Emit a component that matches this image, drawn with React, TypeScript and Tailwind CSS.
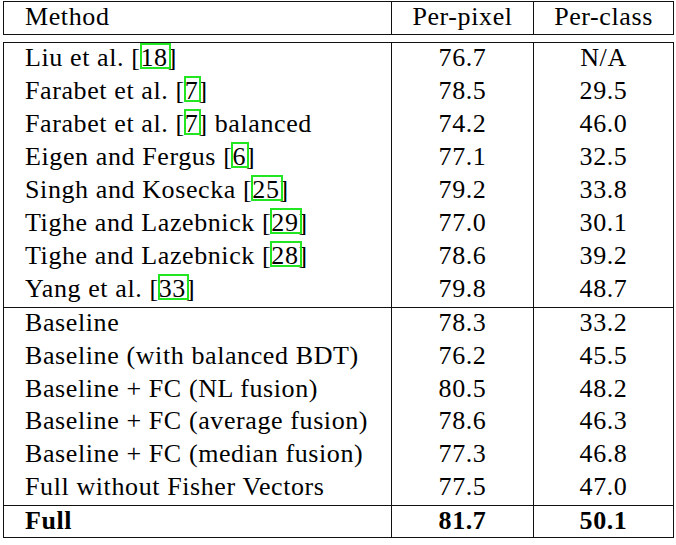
import React from "react";

const Cite = ({ n }: { n: string }) => (
  <>
    [
    <span className="relative">
      {n}
      <span className="absolute top-0 bottom-[3px] left-[-1px] right-[-3px] border-2 border-[#22e622]" />
    </span>
    ]
  </>
);

type Row = { m: React.ReactNode; a: string; b: string };

const sec1: Row[] = [
  { m: <>Liu et al. <Cite n="18" /></>, a: "76.7", b: "N/A" },
  { m: <>Farabet et al. <Cite n="7" /></>, a: "78.5", b: "29.5" },
  { m: <>Farabet et al. <Cite n="7" /> balanced</>, a: "74.2", b: "46.0" },
  { m: <>Eigen and Fergus <Cite n="6" /></>, a: "77.1", b: "32.5" },
  { m: <>Singh and Kosecka <Cite n="25" /></>, a: "79.2", b: "33.8" },
  { m: <>Tighe and Lazebnick <Cite n="29" /></>, a: "77.0", b: "30.1" },
  { m: <>Tighe and Lazebnick <Cite n="28" /></>, a: "78.6", b: "39.2" },
  { m: <>Yang et al. <Cite n="33" /></>, a: "79.8", b: "48.7" },
];

const sec2: Row[] = [
  { m: "Baseline", a: "78.3", b: "33.2" },
  { m: "Baseline (with balanced BDT)", a: "76.2", b: "45.5" },
  { m: "Baseline + FC (NL fusion)", a: "80.5", b: "48.2" },
  { m: "Baseline + FC (average fusion)", a: "78.6", b: "46.3" },
  { m: "Baseline + FC (median fusion)", a: "77.3", b: "46.8" },
  { m: "Full without Fisher Vectors", a: "77.5", b: "47.0" },
];

const Line = ({ r, h = "h-[33px]", bold = false }: { r: Row; h?: string; bold?: boolean }) => (
  <div className={"grid grid-cols-[387px_142px_140px] leading-[30px] " + h + (bold ? " font-bold" : "")}>
    <div className="pl-[21px] whitespace-nowrap">{r.m}</div>
    <div className="border-l border-[#111] text-center">{r.a}</div>
    <div className="border-l border-[#111] text-center">{r.b}</div>
  </div>
);

export default function App() {
  return (
    <div className="w-[676px] h-[545px] bg-white pt-[1px] pl-[3px] text-black text-[26px] tracking-[0.6px] font-['Liberation_Serif','DejaVu_Serif',serif]">
      <div className="w-[671px] border border-[#111]">
        <Line r={{ m: "Method", a: "Per-pixel", b: "Per-class" }} h="h-[32px]" />
      </div>
      <div className="mt-[7px] w-[671px] border border-[#111]">
        <div>
          {sec1.map((r, i) => (
            <Line key={i} r={r} />
          ))}
        </div>
        <div className="border-t border-[#111] grid grid-rows-6 h-[198px]">
          {sec2.map((r, i) => (
            <Line key={i} r={r} h="h-full" />
          ))}
        </div>
        <div className="border-t border-[#111]">
          <Line r={{ m: "Full", a: "81.7", b: "50.1" }} h="h-[31px]" bold />
        </div>
      </div>
    </div>
  );
}
